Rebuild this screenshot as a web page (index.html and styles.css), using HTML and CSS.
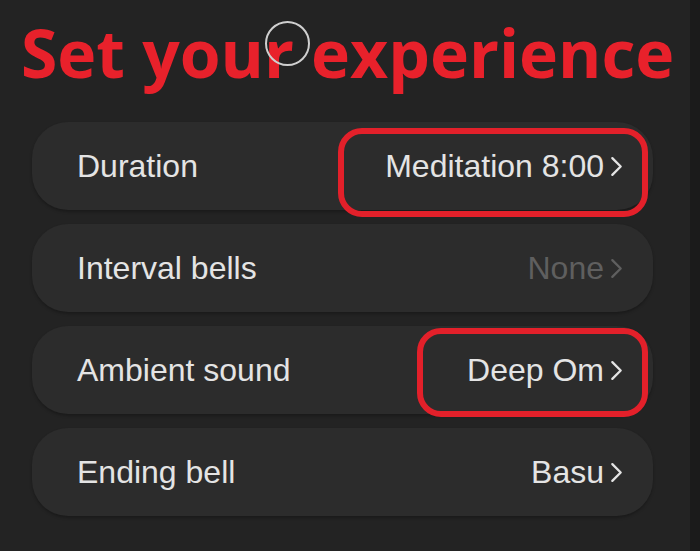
FILE: index.html
```html
<!DOCTYPE html>
<html>
<head>
<meta charset="utf-8">
<link rel="stylesheet" href="styles.css">
</head>
<body>
<div class="page">
  <h1 class="title">Set your experience</h1>
  <div class="cursor-ring"></div>
  <div class="list">
    <div class="row">
      <span class="label">Duration</span>
      <span class="value">Meditation 8:00<svg class="chev" viewBox="0 0 12 22"><polyline points="2,3 10,11 2,19"/></svg></span>
    </div>
    <div class="row">
      <span class="label">Interval bells</span>
      <span class="value muted">None<svg class="chev" viewBox="0 0 12 22"><polyline points="2,3 10,11 2,19"/></svg></span>
    </div>
    <div class="row">
      <span class="label">Ambient sound</span>
      <span class="value">Deep Om<svg class="chev" viewBox="0 0 12 22"><polyline points="2,3 10,11 2,19"/></svg></span>
    </div>
    <div class="row">
      <span class="label">Ending bell</span>
      <span class="value">Basu<svg class="chev" viewBox="0 0 12 22"><polyline points="2,3 10,11 2,19"/></svg></span>
    </div>
  </div>
  <div class="mark mark-duration"></div>
  <div class="mark mark-ambient"></div>
  <div class="edge"></div>
</div>
</body>
</html>
```

FILE: styles.css
```css
html, body {
  margin: 0;
  padding: 0;
  background: #232323;
}
.page {
  position: relative;
  width: 700px;
  height: 551px;
  overflow: hidden;
  background: #232323;
}
.title {
  margin: 0;
  padding: 8px 0 0 21px;
  height: 112px;
  box-sizing: border-box;
  font-family: "Open Sans", "Liberation Sans", sans-serif;
  font-weight: 700;
  font-size: 66px;
  line-height: 88px;
  color: #e8212b;
  white-space: nowrap;
}
.cursor-ring {
  position: absolute;
  left: 265px;
  top: 21px;
  width: 41px;
  height: 41px;
  border: 2px solid #cfcfcf;
  border-radius: 50%;
}
.list {
  display: flex;
  flex-direction: column;
  gap: 14px;
  padding: 10px 0 0 32px;
  width: 621px;
}
.row {
  display: flex;
  align-items: center;
  justify-content: space-between;
  height: 88px;
  padding: 0 30px 0 45px;
  background: #2c2c2c;
  border-radius: 36px;
  font-family: "Liberation Sans", Arial, sans-serif;
  font-size: 32px;
  color: #e4e4e4;
  box-shadow: 0 2px 3px rgba(0,0,0,0.25);
}
.value {
  display: flex;
  align-items: center;
  gap: 6px;
}
.value.muted {
  color: #5f5f5f;
}
.chev {
  width: 13px;
  height: 23px;
  fill: none;
  stroke: currentColor;
  stroke-width: 2.2;
  stroke-linecap: round;
  stroke-linejoin: round;
}
.mark {
  position: absolute;
  border: 6px solid #e3202a;
  border-radius: 24px;
  box-sizing: border-box;
}
.mark-duration {
  left: 338px;
  top: 128px;
  width: 310px;
  height: 89px;
}
.mark-ambient {
  left: 417px;
  top: 328px;
  width: 231px;
  height: 89px;
}
.edge {
  position: absolute;
  right: 0;
  top: 0;
  width: 10px;
  height: 551px;
  background: #1b1b1b;
}
```
